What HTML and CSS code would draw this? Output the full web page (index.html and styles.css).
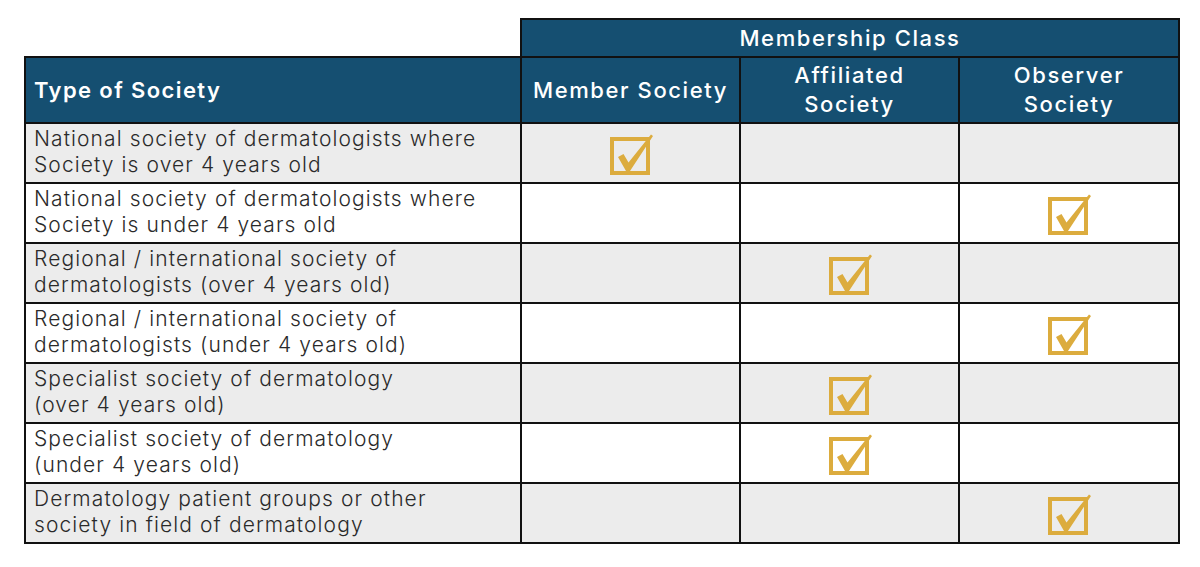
FILE: index.html
```html
<!DOCTYPE html>
<html lang="en">
<head>
<meta charset="utf-8">
<title>Membership Class</title>
<link rel="stylesheet" href="styles.css">
</head>
<body>
<svg width="0" height="0" class="defs" aria-hidden="true">
  <defs>
    <symbol id="chk" viewBox="0 0 44 42">
      <rect x="2" y="6" width="36" height="34" fill="none" stroke="#dcac3e" stroke-width="4"/>
      <path d="M8 24 L13.5 21 L18.5 29.5 L41 1.5 L43 3 L20 38 L16 38 Z" fill="#dcac3e"/>
    </symbol>
  </defs>
</svg>
<table class="grid">
  <colgroup>
    <col class="c-type">
    <col class="c-cls">
    <col class="c-cls">
    <col class="c-last">
  </colgroup>
  <thead>
    <tr class="h1">
      <th class="blank"></th>
      <th colspan="3" class="mc">Membership Class</th>
    </tr>
    <tr class="h2">
      <th class="type">Type of Society</th>
      <th>Member Society</th>
      <th>Affiliated<br>Society</th>
      <th>Observer<br>Society</th>
    </tr>
  </thead>
  <tbody>
    <tr class="alt">
      <td class="label">National society of dermatologists where<br>Society is over 4 years old</td>
      <td class="mark"><svg class="ck"><use href="#chk"/></svg></td>
      <td></td>
      <td></td>
    </tr>
    <tr>
      <td class="label">National society of dermatologists where<br>Society is under 4 years old</td>
      <td></td>
      <td></td>
      <td class="mark"><svg class="ck"><use href="#chk"/></svg></td>
    </tr>
    <tr class="alt">
      <td class="label">Regional / international society of<br>dermatologists (over 4 years old)</td>
      <td></td>
      <td class="mark"><svg class="ck"><use href="#chk"/></svg></td>
      <td></td>
    </tr>
    <tr>
      <td class="label">Regional / international society of<br>dermatologists (under 4 years old)</td>
      <td></td>
      <td></td>
      <td class="mark"><svg class="ck"><use href="#chk"/></svg></td>
    </tr>
    <tr class="alt">
      <td class="label">Specialist society of dermatology<br>(over 4 years old)</td>
      <td></td>
      <td class="mark"><svg class="ck"><use href="#chk"/></svg></td>
      <td></td>
    </tr>
    <tr>
      <td class="label">Specialist society of dermatology<br>(under 4 years old)</td>
      <td></td>
      <td class="mark"><svg class="ck"><use href="#chk"/></svg></td>
      <td></td>
    </tr>
    <tr class="alt">
      <td class="label">Dermatology patient groups or other<br>society in field of dermatology</td>
      <td></td>
      <td></td>
      <td class="mark"><svg class="ck"><use href="#chk"/></svg></td>
    </tr>
  </tbody>
</table>
</body>
</html>
```
FILE: styles.css
```css
html, body {
  margin: 0;
  padding: 0;
  background: #ffffff;
}

body {
  padding: 18px 0 0 24px;
  font-family: Inter, "Open Sans", "Liberation Sans", sans-serif;
  color: #222222;
}

.defs {
  position: absolute;
  width: 0;
  height: 0;
}

.grid {
  border-collapse: collapse;
  table-layout: fixed;
  width: 1154px;
}

.c-type { width: 496px; }
.c-cls { width: 219px; }
.c-last { width: 220px; }

.grid th,
.grid td {
  border: 2px solid #111111;
  padding: 0;
}

.grid th {
  background: #154f71;
  color: #ffffff;
  font-weight: 500;
  font-size: 22px;
  letter-spacing: 1.6px;
  line-height: 29px;
  text-align: center;
  vertical-align: middle;
}

.grid th.blank {
  background: transparent;
  border: none;
}

.h1 th { height: 36px; }
.h2 th { height: 64px; }

.grid th.type {
  text-align: left;
  padding-left: 8px;
  font-weight: 600;
  letter-spacing: 1.4px;
}

.grid td {
  height: 56px;
  background: #ffffff;
  vertical-align: middle;
}

.grid tr.alt td { background: #ececec; }

.grid td.label {
  padding: 0 0 2px 8px;
  font-size: 21px;
  font-weight: 300;
  letter-spacing: 1.1px;
  line-height: 26px;
  color: #2a2a2a;
}

.grid td.mark {
  text-align: center;
  line-height: 0;
}

.ck {
  display: inline-block;
  width: 44px;
  height: 42px;
  margin: 2px 0 0 2px;
}
```
